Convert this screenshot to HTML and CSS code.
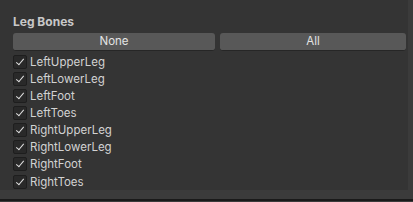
FILE: index.html
```html
<!DOCTYPE html>
<html lang="en">
<head>
    <meta charset="UTF-8">
    <title>Leg Bones</title>
    <link rel="stylesheet" href="styles.css">
</head>
<body>
    <div class="panel">
        <div class="title">Leg Bones</div>
        <div class="btnRow">
            <button class="btn none">None</button>
            <button class="btn all">All</button>
        </div>
        <ul class="bones">
            <li><span class="check"></span>LeftUpperLeg</li>
            <li><span class="check"></span>LeftLowerLeg</li>
            <li><span class="check"></span>LeftFoot</li>
            <li><span class="check"></span>LeftToes</li>
            <li><span class="check"></span>RightUpperLeg</li>
            <li><span class="check"></span>RightLowerLeg</li>
            <li><span class="check"></span>RightFoot</li>
            <li><span class="check"></span>RightToes</li>
        </ul>
    </div>
    <div class="bottomLine"></div>
</body>
</html>
```

FILE: styles.css
```css
body{
    margin: 0;
    background-color: #3b3b3b;
    font-family: Inter, "Liberation Sans", sans-serif;
    font-size: 11.5px;
    color: #d2d2d2;
}

.panel{
    width: 408px;
    height: 190px;
    box-sizing: border-box;
    padding: 13px 0 0 13px;
    background-color: #343434;
}

.title{
    height: 18px;
    line-height: 18px;
    font-size: 12px;
    font-weight: bold;
    color: #c8c8c8;
}

.btnRow{
    display: flex;
    gap: 5px;
    margin-top: 2px;
}

.btn{
    height: 18px;
    padding: 0;
    border: none;
    border-radius: 3px;
    border-bottom: 1px solid #262626;
    background-color: #585858;
    color: #e4e4e4;
    font-family: inherit;
    font-size: 11.5px;
    line-height: 17px;
}

.btn.none{
    width: 202px;
}

.btn.all{
    width: 186px;
}

.bones{
    list-style: none;
    margin: 2px 0 0 0;
    padding: 0;
}

.bones li{
    display: flex;
    align-items: center;
    height: 17.15px;
    gap: 3px;
}

.check{
    width: 14px;
    height: 14px;
    box-sizing: border-box;
    border: 1px solid #1e1e1e;
    border-radius: 2px;
    background-color: #292929;
    position: relative;
}

.check::after{
    content: "";
    position: absolute;
    left: 4px;
    top: 1px;
    width: 3px;
    height: 7px;
    border-right: 1.5px solid #e0e0e0;
    border-bottom: 1.5px solid #e0e0e0;
    transform: rotate(40deg);
}

.bottomLine{
    margin-top: 9px;
    height: 2px;
    background-color: #1a1a1a;
}
```
